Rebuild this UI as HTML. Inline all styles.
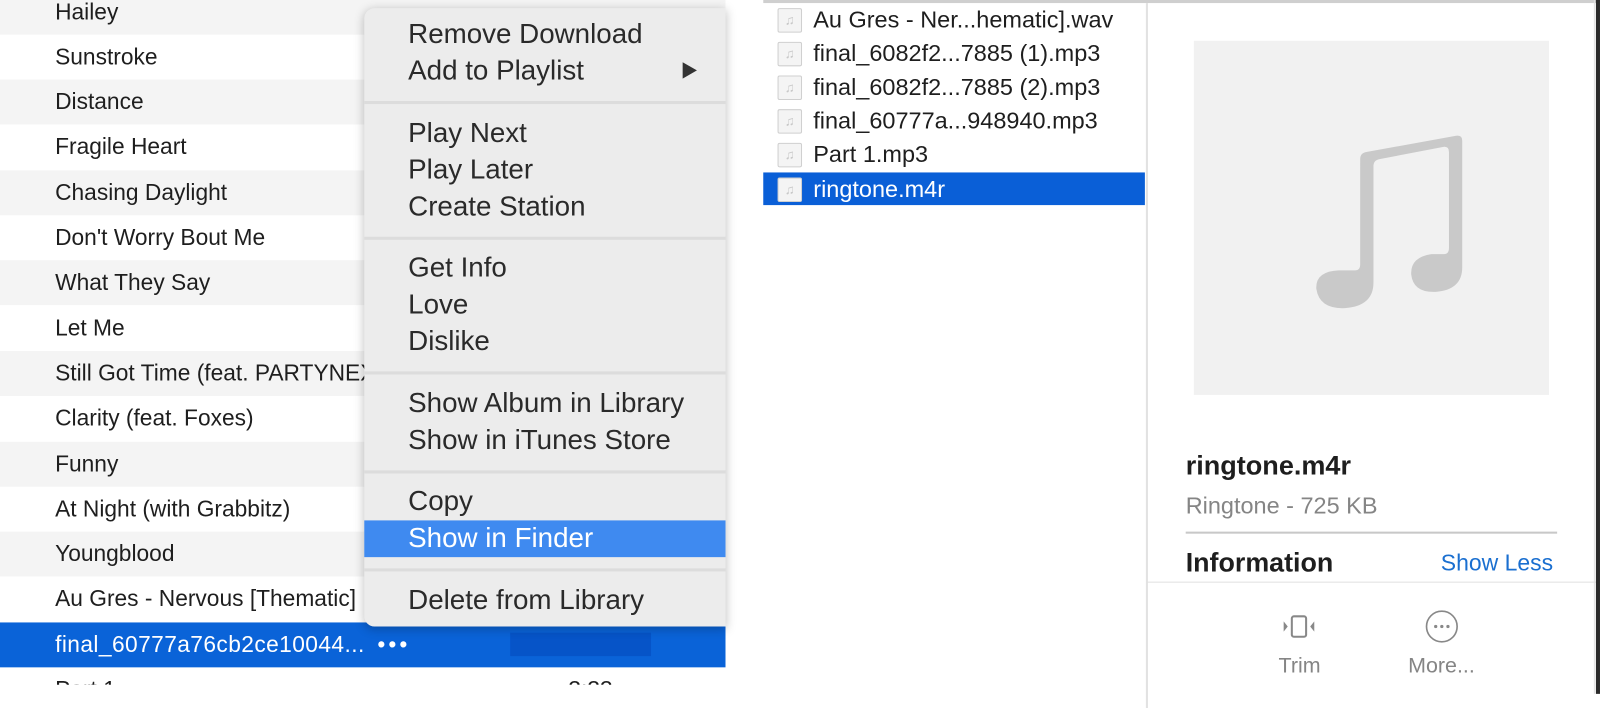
<!DOCTYPE html>
<html><head><meta charset="utf-8"><style>
*{margin:0;padding:0;box-sizing:border-box}
body{width:1600px;height:694px;background:#fff;position:relative;overflow:hidden;font-family:"Liberation Sans",sans-serif}
#wrap{position:absolute;left:0;top:0;width:1568px;height:680px;transform:scale(1.0204);transform-origin:0 0}
.abs{position:absolute}
#left{left:0;top:0;width:711px;height:671px;overflow:hidden}
.row{position:absolute;left:0;width:711px;height:44.3px;font-size:22.3px;color:#1e1e1e;padding-left:54px;line-height:44px;white-space:nowrap}
.g{background:#f4f4f4}
.sel{background:#0a63d8;color:#fff}
#menu{left:357px;top:8px;width:354px;height:606px;background:#ececec;border-radius:10px 0 0 10px;box-shadow:0 2px 10px rgba(0,0,0,.25)}
.mi{position:absolute;left:43px;font-size:27.2px;color:#2a2a2a;line-height:36px;height:36px;transform:translateY(-18px);white-space:nowrap}
.sep{position:absolute;left:0;width:354px;height:3px;background:#dcdcdc}
.hl{position:absolute;left:0;width:354px;top:502px;height:36px;background:#3f8af0}
.frow{position:absolute;left:748px;width:374px;height:32px;font-size:23px;color:#1e1e1e;line-height:32px;padding-left:49px;white-space:nowrap}
.ic{position:absolute;left:14px;top:5px;width:24px;height:24px;background:#f4f4f4;border:1px solid #cfcfcf;border-radius:2px;color:#c8c8c8;font-size:13px;line-height:22px;text-align:center}
</style></head><body><div id="wrap">
<div id="left" class="abs">
<div class="row g" style="top:-10px">Hailey</div>
<div class="abs" style="left:565px;top:-20px;font-size:22px;color:#222">3:47&nbsp;&nbsp;WRENN</div>
<div class="row" style="top:34px">Sunstroke</div>
<div class="row g" style="top:78px">Distance</div>
<div class="row" style="top:122px">Fragile Heart</div>
<div class="row g" style="top:167px">Chasing Daylight</div>
<div class="row" style="top:211px">Don't Worry Bout Me</div>
<div class="row g" style="top:255px">What They Say</div>
<div class="row" style="top:300px">Let Me</div>
<div class="row g" style="top:344px">Still Got Time (feat. PARTYNEXTDOOR)</div>
<div class="row" style="top:388px">Clarity (feat. Foxes)</div>
<div class="row g" style="top:433px">Funny</div>
<div class="row" style="top:477px">At Night (with Grabbitz)</div>
<div class="row g" style="top:521px">Youngblood</div>
<div class="row" style="top:565px">Au Gres - Nervous [Thematic]</div>
<div class="row sel" style="top:610px"><span style="letter-spacing:0.4px">final_60777a76cb2ce10044...</span>&nbsp; <span style="letter-spacing:3px">•••</span><div class="abs" style="left:500px;top:10px;width:138px;height:23px;background:#0654c8"></div></div>
<div class="row" style="top:654px">Part 1<span class="abs" style="left:557px">3:33</span></div>
</div>
<div id="menu" class="abs">
<div class="mi" style="top:25px">Remove Download</div>
<div class="mi" style="top:61px">Add to Playlist</div>
<div class="abs" style="left:312px;top:53px;width:0;height:0;border-left:14px solid #333;border-top:8px solid transparent;border-bottom:8px solid transparent"></div>
<div class="sep" style="top:91px"></div>
<div class="mi" style="top:122px">Play Next</div>
<div class="mi" style="top:158px">Play Later</div>
<div class="mi" style="top:194px">Create Station</div>
<div class="sep" style="top:224px"></div>
<div class="mi" style="top:254px">Get Info</div>
<div class="mi" style="top:290px">Love</div>
<div class="mi" style="top:326px">Dislike</div>
<div class="sep" style="top:356px"></div>
<div class="mi" style="top:387px">Show Album in Library</div>
<div class="mi" style="top:423px">Show in iTunes Store</div>
<div class="sep" style="top:453px"></div>
<div class="mi" style="top:483px">Copy</div>
<div class="hl"></div>
<div class="mi" style="top:519px;color:#fff">Show in Finder</div>
<div class="sep" style="top:549px"></div>
<div class="mi" style="top:580px">Delete from Library</div>
</div>

<div class="abs" style="left:748px;top:0;width:820px;height:3px;background:#cfcfcf"></div>
<div class="frow" style="top:3px"><div class="ic">♫</div>Au Gres - Ner...hematic].wav</div>
<div class="frow" style="top:36px"><div class="ic">♫</div>final_6082f2...7885 (1).mp3</div>
<div class="frow" style="top:69px"><div class="ic">♫</div>final_6082f2...7885 (2).mp3</div>
<div class="frow" style="top:102px"><div class="ic">♫</div>final_60777a...948940.mp3</div>
<div class="frow" style="top:135px"><div class="ic">♫</div>Part 1.mp3</div>
<div class="frow" style="top:169px;background:#0a5fd7;color:#fff"><div class="ic">♫</div>ringtone.m4r</div>
<div class="abs" style="left:1123px;top:3px;width:2px;height:691px;background:#e2e2e2"></div>

<div class="abs" style="left:1170px;top:40px;width:348px;height:347px;background:#f1f1f1"></div>
<svg class="abs" style="left:0;top:0" width="1568" height="680">
<path d="M1333 156 Q1333 150 1339 149 L1427 133 Q1433 132 1433 138 L1433 262 Q1433 284 1407 286 Q1385 287 1383 269 Q1382 252 1403 249 L1415 249 Q1420 249 1420 243 L1420 149 Q1420 143 1414 144 L1352 156 Q1346 157 1346 163 L1346 277 Q1346 300 1318 302 Q1293 303 1290 283 Q1289 266 1312 265 L1328 265 Q1333 265 1333 259 Z" fill="#c9c9c9"/>
<rect x="1266" y="604" width="14" height="20" rx="2" fill="none" stroke="#888" stroke-width="2"/>
<path d="M1258 609 L1262 614 L1258 619 Z M1288 609 L1284 614 L1288 619 Z" fill="#888"/>
<circle cx="1413" cy="614" r="15" fill="none" stroke="#888" stroke-width="1.6"/>
<circle cx="1407" cy="614" r="1.6" fill="#888"/><circle cx="1413" cy="614" r="1.6" fill="#888"/><circle cx="1419" cy="614" r="1.6" fill="#888"/>
</svg>
<div class="abs" style="left:1162px;top:441px;font-size:26.5px;font-weight:bold;color:#1e1e1e">ringtone.m4r</div>
<div class="abs" style="left:1162px;top:482px;font-size:23px;color:#858585">Ringtone - 725 KB</div>
<div class="abs" style="left:1162px;top:521px;width:364px;height:2px;background:#c8c8c8"></div>
<div class="abs" style="left:1162px;top:536px;font-size:26.3px;font-weight:bold;color:#1e1e1e">Information</div>
<div class="abs" style="left:1412px;top:539px;font-size:22.5px;color:#1a6fd0">Show Less</div>
<div class="abs" style="left:1124px;top:570px;width:440px;height:1px;background:#e0e0e0"></div>
<div class="abs" style="left:1253px;top:641px;font-size:21px;color:#858585">Trim</div>
<div class="abs" style="left:1380px;top:641px;font-size:21px;color:#858585">More...</div>
<div class="abs" style="left:1562px;top:0;width:1px;height:680px;background:#e0e0e0"></div>
<div class="abs" style="left:1564px;top:0;width:4px;height:680px;background:#2a2a2a"></div>
</div></body></html>
